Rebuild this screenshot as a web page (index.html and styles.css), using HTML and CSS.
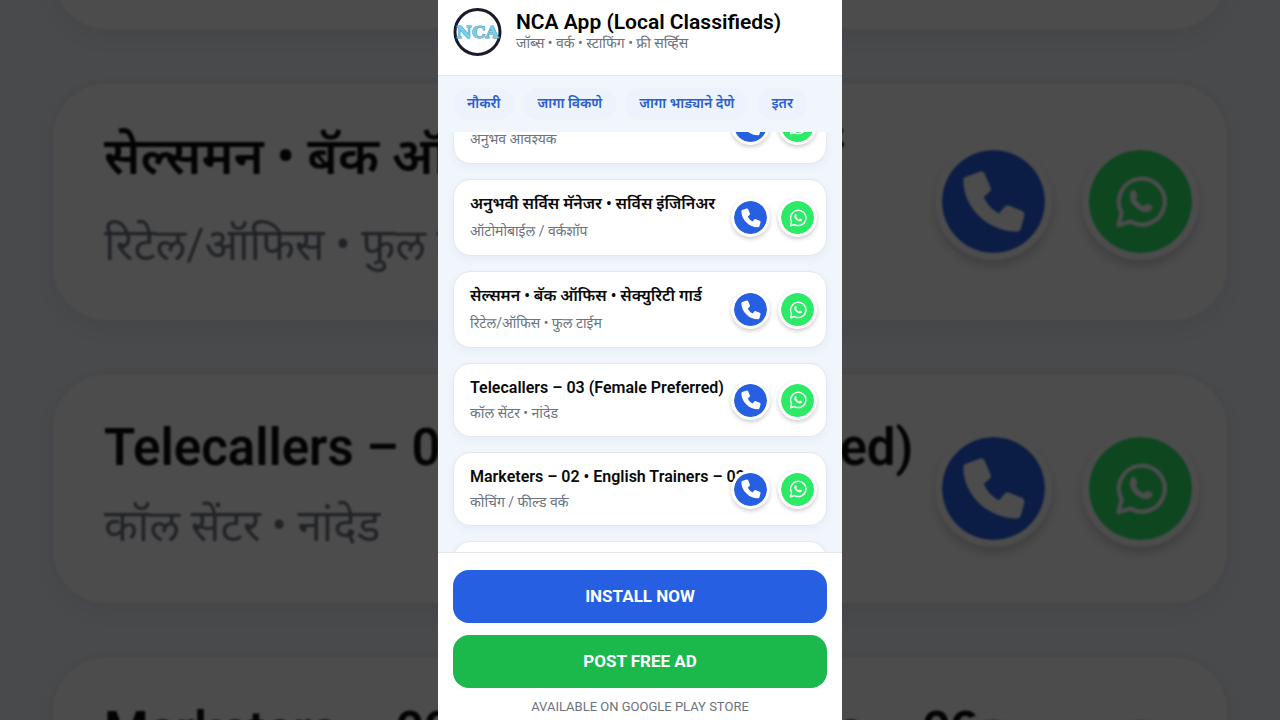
FILE: index.html
```html
<!DOCTYPE html>
<html lang="mr">
<head>
<meta charset="utf-8">
<meta name="viewport" content="width=device-width, initial-scale=1">
<title>NCA App (Local Classifieds)</title>
<link rel="stylesheet" href="styles.css">
</head>
<body>
<svg class="sprite" aria-hidden="true">
  <symbol id="phone" viewBox="0.8 1 24 24">
    <path d="M3.2 4.3 8 2.6c.7-.2 1.3.1 1.6.7l2 4.7c.3.6.1 1.2-.4 1.6L9.3 11.300c1 2.300 2.600 4.200 5.200 5.600l1.900-2.200c.4-.5 1-.6 1.600-.4l4.300 1.700c.7.300 1 .9.900 1.600l-1.200 4.500c-.2.700-.7 1-1.400 1C10.400 23.100 2.300 14.600 2.300 5.600c0-.7.300-1.100.900-1.300z" fill="currentColor"/>
  </symbol>
  <symbol id="whatsapp" viewBox="0 0 24 24">
    <path d="M2 22.300 3.400 16.700A10.200 10.200 0 1 1 7.300 20.700z" fill="none" stroke="currentColor" stroke-width="1.900" stroke-linejoin="round"/>
    <path d="M7.700 7.200c.5-.7 1.500-.8 1.900-.1l.8 2c.1.400-.6 1.100-.7 1.600.8 1.500 2 2.500 3.600 3.200.5-.3 1-1.200 1.500-1.100l2.100.9c.5.300.2 1.500-.3 1.900-2.100 2-5.200.5-7.400-1.600C7.400 12.200 6.200 9.200 7.700 7.200z" fill="currentColor"/>
  </symbol>
</svg>

<div class="backdrop" aria-hidden="true">
  <div class="card card-past"></div>
  <div class="card">
    <p class="card-title">सेल्समन • बॅक ऑफिस • सेक्युरिटी गार्ड</p>
    <p class="card-sub">रिटेल/ऑफिस • फुल टाईम</p>
    <div class="actions"><span class="round call"><svg><use href="#phone"/></svg></span><span class="round chat"><svg><use href="#whatsapp"/></svg></span></div>
  </div>
  <div class="card latin">
    <p class="card-title">Telecallers – 03 (Female Preferred)</p>
    <p class="card-sub">कॉल सेंटर • नांदेड</p>
    <div class="actions"><span class="round call"><svg><use href="#phone"/></svg></span><span class="round chat"><svg><use href="#whatsapp"/></svg></span></div>
  </div>
  <div class="card latin">
    <p class="card-title">Marketers – 02 • English Trainers – 02</p>
    <div class="actions"><span class="round call"><svg><use href="#phone"/></svg></span><span class="round chat"><svg><use href="#whatsapp"/></svg></span></div>
  </div>
</div>

<div class="app">
  <header class="header">
    <svg class="logo" viewBox="0 0 48 48" role="img" aria-label="NCA">
      <circle cx="24" cy="24" r="22.500" fill="#fff" stroke="#1a1a2c" stroke-width="3"/>
      <text class="logo-text" x="24" y="30" text-anchor="middle">NCA</text>
    </svg>
    <div>
      <h1 class="title">NCA App (Local Classifieds)</h1>
      <p class="subtitle">जॉब्स • वर्क • स्टाफिंग • फ्री सर्व्हिस</p>
    </div>
  </header>

  <nav class="tabs">
    <button class="tab" type="button">नौकरी</button>
    <button class="tab" type="button">जागा विकणे</button>
    <button class="tab" type="button">जागा भाड्याने देणे</button>
    <button class="tab" type="button">इतर</button>
  </nav>

  <main class="list">
    <article class="card card-past">
      <p class="card-sub">अनुभव आवश्यक</p>
      <div class="actions"><button class="round call" type="button" aria-label="Call"><svg><use href="#phone"/></svg></button><button class="round chat" type="button" aria-label="WhatsApp"><svg><use href="#whatsapp"/></svg></button></div>
    </article>
    <article class="card">
      <h2 class="card-title">अनुभवी सर्विस मॅनेजर • सर्विस इंजिनिअर</h2>
      <p class="card-sub">ऑटोमोबाईल / वर्कशॉप</p>
      <div class="actions"><button class="round call" type="button" aria-label="Call"><svg><use href="#phone"/></svg></button><button class="round chat" type="button" aria-label="WhatsApp"><svg><use href="#whatsapp"/></svg></button></div>
    </article>
    <article class="card">
      <h2 class="card-title">सेल्समन • बॅक ऑफिस • सेक्युरिटी गार्ड</h2>
      <p class="card-sub">रिटेल/ऑफिस • फुल टाईम</p>
      <div class="actions"><button class="round call" type="button" aria-label="Call"><svg><use href="#phone"/></svg></button><button class="round chat" type="button" aria-label="WhatsApp"><svg><use href="#whatsapp"/></svg></button></div>
    </article>
    <article class="card latin">
      <h2 class="card-title">Telecallers – 03 (Female Preferred)</h2>
      <p class="card-sub">कॉल सेंटर • नांदेड</p>
      <div class="actions"><button class="round call" type="button" aria-label="Call"><svg><use href="#phone"/></svg></button><button class="round chat" type="button" aria-label="WhatsApp"><svg><use href="#whatsapp"/></svg></button></div>
    </article>
    <article class="card latin">
      <h2 class="card-title">Marketers – 02 • English Trainers – 02</h2>
      <p class="card-sub">कोचिंग / फील्ड वर्क</p>
      <div class="actions"><button class="round call" type="button" aria-label="Call"><svg><use href="#phone"/></svg></button><button class="round chat" type="button" aria-label="WhatsApp"><svg><use href="#whatsapp"/></svg></button></div>
    </article>
    <article class="card latin card-next"></article>
  </main>

  <footer class="footer">
    <button class="cta install" type="button">INSTALL NOW</button>
    <button class="cta post" type="button">POST FREE AD</button>
    <p class="note">AVAILABLE ON GOOGLE PLAY STORE</p>
  </footer>
</div>
</body>
</html>
```

FILE: styles.css
```css
* { box-sizing: border-box; }

body {
  margin: 0;
  height: 100vh;
  overflow: hidden;
  display: flex;
  justify-content: center;
  background: #484a4c;
  font-family: Roboto, "Noto Sans Devanagari", "Noto Sans", sans-serif;
  color: #0a0a0a;
}

h1, h2, p { margin: 0; }
button { font: inherit; border: 0; padding: 0; }
.sprite { position: absolute; width: 0; height: 0; }

.app {
  position: relative;
  width: 100%;
  max-width: 404px;
  height: 100vh;
  display: flex;
  flex-direction: column;
  background: #f1f6fd;
}

.header {
  display: flex;
  gap: 14px;
  padding: 8px 15px 19px;
  background: #fff;
  border-bottom: 1px solid #dfe3ea;
}
.logo { width: 49px; height: 48px; flex: none; }
.logo-text {
  font: bold 17px "DejaVu Serif", serif;
  fill: #74d2ea;
  stroke: #4a93ad;
  stroke-width: 1px;
  paint-order: stroke;
}
.title { font-size: 21px; line-height: 24px; font-weight: 600; margin-top: 2px; color: #000; }
.subtitle { font-size: 14px; line-height: 18px; color: #6b7280; white-space: nowrap; }

.tabs { display: flex; gap: 9px; padding: 12px 15px; }
.tab {
  height: 32px;
  padding: 0 14px;
  border-radius: 16px;
  background: #edf3fd;
  color: #2a5fd0;
  font-size: 14px;
  font-weight: 600;
  white-space: nowrap;
}

.list {
  flex: 1;
  min-height: 0;
  overflow: hidden;
  display: flex;
  flex-direction: column;
  gap: 15px;
  padding: 0 15px;
}
.card {
  position: relative;
  flex: none;
  height: 77px;
  padding: 11px 16px;
  background: #fff;
  border: 1px solid #e4e8ee;
  border-radius: 18px;
  box-shadow: 0 3px 8px rgba(30, 50, 90, 0.05);
  white-space: nowrap;
}
.card.latin { height: 74px; }
.list .card-past { margin-top: -45px; padding-top: 37px; }
.card-title { font-size: 16px; line-height: 26px; font-weight: 600; color: #0a0a0a; }
.card-sub { font-size: 14px; line-height: 28px; color: #6b7280; }
.latin .card-sub { line-height: 24px; }

.actions {
  position: absolute;
  right: 9px;
  top: 0;
  bottom: 0;
  display: flex;
  align-items: center;
  gap: 8px;
}
.round {
  display: flex;
  align-items: center;
  justify-content: center;
  width: 39px;
  height: 39px;
  border: 3px solid #fff;
  border-radius: 50%;
  color: #fff;
  background-clip: padding-box;
  box-shadow: 0 2px 4px rgba(0, 0, 0, 0.2);
}
.call { background-color: #265fe2; }
.chat { background-color: #2aea66; }
.call svg { width: 22px; height: 22px; flex: none; }
.chat svg { width: 18px; height: 18px; flex: none; }

.footer {
  display: flex;
  flex-direction: column;
  gap: 12px;
  padding: 17px 15px 6px;
  background: #fff;
  border-top: 1px solid #e1e6ec;
}
.cta {
  height: 53px;
  padding-bottom: 1px;
  border-radius: 16px;
  color: #fff;
  font-size: 17px;
  font-weight: 700;
}
.install { background: #265fe2; }
.post { background: #1bb94c; }
.note { font-size: 13px; line-height: 14px; color: #6b7280; text-align: center; }

/* Enlarged, dimmed copy of the list behind the app */
.backdrop {
  position: absolute;
  inset: 0;
  overflow: hidden;
  display: flex;
  flex-direction: column;
  gap: 50px;
  padding: 0 51px;
  background: #f1f6fd;
  filter: brightness(0.3);
}
.backdrop .card {
  height: 241px;
  padding: 36px 51px;
  border-width: 2px;
  border-radius: 56px;
  box-shadow: 0 9px 24px rgba(30, 50, 90, 0.06);
  filter: blur(1px);
}
.backdrop .card.latin { height: 233px; }
.backdrop .card-past { margin-top: -210px; }
.backdrop .card-title { font-size: 51px; line-height: 76px; }
.backdrop .card-sub { font-size: 44px; line-height: 100px; }
.backdrop .latin .card-sub { line-height: 80px; }
.backdrop .actions { right: 28px; gap: 30px; }
.backdrop .round {
  width: 117px;
  height: 117px;
  border-width: 7px;
  box-shadow: 0 6px 12px rgba(0, 0, 0, 0.2);
}
.backdrop .call svg { width: 70px; height: 70px; }
.backdrop .chat svg { width: 54px; height: 54px; }
```
